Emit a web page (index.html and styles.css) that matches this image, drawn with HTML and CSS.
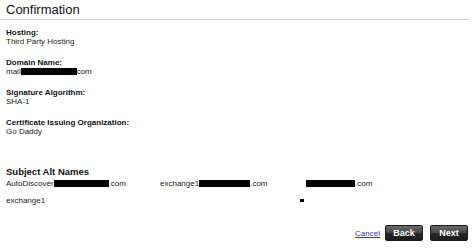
FILE: index.html
```html
<!DOCTYPE html>
<html>
<head>
<meta charset="utf-8">
<link rel="stylesheet" href="styles.css">
</head>
<body>
<div class="page">
  <h1 class="title">Confirmation</h1>
  <div class="fields">
    <div class="field">
      <div class="label">Hosting:</div>
      <div class="value">Third Party Hosting</div>
    </div>
    <div class="field">
      <div class="label">Domain Name:</div>
      <div class="value">mail<span class="redact r-mail"></span>com</div>
    </div>
    <div class="field">
      <div class="label">Signature Algorithm:</div>
      <div class="value">SHA-1</div>
    </div>
    <div class="field">
      <div class="label">Certificate Issuing Organization:</div>
      <div class="value">Go Daddy</div>
    </div>
  </div>
  <h2 class="section">Subject Alt Names</h2>
  <div class="alt-grid">
    <div class="alt">AutoDiscover<span class="redact r-auto"></span>.com</div>
    <div class="alt">exchange1<span class="redact r-ex"></span>.com</div>
    <div class="alt alt-third"><span class="redact r-third"></span>.com</div>
    <div class="alt">exchange1</div>
    <div class="alt"></div>
    <div class="alt"><span class="redact r-dot"></span></div>
  </div>
  <div class="actions">
    <a class="cancel" href="#">Cancel</a>
    <button class="btn">Back</button>
    <button class="btn btn-next">Next</button>
  </div>
</div>
</body>
</html>
```
FILE: styles.css
```css
html, body {
  margin: 0;
  padding: 0;
  background: #ffffff;
}
body {
  font-family: "Liberation Sans", Arial, sans-serif;
  color: #1a1a1a;
  width: 474px;
  height: 248px;
  overflow: hidden;
}
.page {
  display: flex;
  flex-direction: column;
}
.title {
  margin: 0;
  padding: 2px 0 2px 6px;
  font-size: 13px;
  line-height: 15px;
  font-weight: normal;
  color: #111;
  border-bottom: 1px solid #d2d2d2;
  margin-right: 4px;
}
.fields {
  display: flex;
  flex-direction: column;
  padding: 8px 6px 0 6px;
  gap: 12px;
}
.field {
  font-size: 8px;
  line-height: 9px;
}
.label {
  font-weight: bold;
  color: #111;
}
.value {
  color: #222;
}
.redact {
  display: inline-block;
  background: #000;
  vertical-align: -1px;
  height: 7px;
}
.r-mail { width: 56px; }
.r-auto { width: 55px; }
.r-ex { width: 51px; }
.r-third { width: 49px; margin-left: 6px; }
.r-dot { width: 4px; height: 3px; vertical-align: 1px; }
.section {
  margin: 0;
  padding: 30px 6px 0 6px;
  font-size: 9.5px;
  line-height: 11px;
  font-weight: bold;
  color: #111;
}
.alt-grid {
  display: grid;
  grid-template-columns: 154px 140px auto;
  row-gap: 8px;
  padding: 2px 6px 0 6px;
  font-size: 8px;
  line-height: 9px;
  color: #222;
}
.actions {
  display: flex;
  justify-content: flex-end;
  align-items: center;
  gap: 5px;
  padding: 20px 6px 0 0;
}
.cancel {
  font-size: 8px;
  color: #3333cc;
  text-decoration: underline;
}
.btn {
  font-family: "Liberation Sans", Arial, sans-serif;
  font-weight: bold;
  font-size: 9px;
  color: #ffffff;
  width: 38px;
  height: 16px;
  padding: 0;
  border: 1px solid #1a1a1a;
  border-radius: 2px;
  background: linear-gradient(#6a6a6a 0%, #4a4a4a 45%, #262626 55%, #1c1c1c 100%);
}
.btn-next {
  margin-left: 2px;
}
```
